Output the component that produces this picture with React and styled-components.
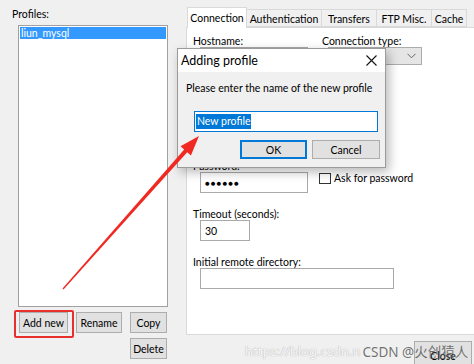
import React from "react";
import styled, { createGlobalStyle } from "styled-components";

const Global = createGlobalStyle`
  html, body { margin: 0; padding: 0; background: #f0f0f0; }
  body { font-family: "Lato", "Noto Sans", "Noto Sans CJK SC", sans-serif; font-size: 10.5px; color: #000; }
  * { box-sizing: border-box; }
`;

const Window = styled.div`
  position: relative;
  width: 474px;
  height: 364px;
  overflow: hidden;
  background: #f0f0f0;
  display: flex;
`;

const LeftCol = styled.div`
  width: 186px;
  flex: none;
  display: flex;
  flex-direction: column;
  padding: 6px 0 0 12px;
`;

const Caption = styled.div`
  line-height: 16px;
  height: 16px;
`;

const ListBox = styled.div`
  margin: 3px 0 0 6px;
  width: 150px;
  height: 282px;
  background: #fff;
  border: 1px solid #a0a0a0;
  padding: 1px;
`;

const ListItem = styled.div`
  height: 12px;
  line-height: 12px;
  padding-left: 1px;
  background: ${(p) => (p.$selected ? "#3399ff" : "transparent")};
  color: ${(p) => (p.$selected ? "#fff" : "#000")};
`;

const ButtonGrid = styled.div`
  margin: 5px 0 0 7px;
  display: grid;
  grid-template-columns: 49px 46px 37px;
  grid-auto-rows: 21px;
  column-gap: 8px;
  row-gap: 5px;
`;

const WinButton = styled.button`
  font: inherit;
  color: #000;
  padding: 0;
  background: #e1e1e1;
  border: 1px solid ${(p) => (p.$default ? "#0078d7" : "#adadad")};
  box-shadow: ${(p) => (p.$default ? "inset 0 0 0 1px #0078d7" : "none")};
  grid-column: ${(p) => p.$col || "auto"};
  width: ${(p) => (p.$w ? p.$w + "px" : "auto")};
  height: ${(p) => (p.$h ? p.$h + "px" : "auto")};
`;

const RightCol = styled.div`
  flex: 1;
  display: flex;
  flex-direction: column;
  padding-top: 7px;
  min-width: 0;
`;

const TabStrip = styled.div`
  display: flex;
  align-items: flex-end;
  height: 20px;
  padding-left: 1px;
  position: relative;
  z-index: 1;
`;

const Tab = styled.div`
  width: ${(p) => p.$w}px;
  height: ${(p) => (p.$active ? 21 : 18)}px;
  margin-bottom: ${(p) => (p.$active ? -1 : 0)}px;
  background: ${(p) => (p.$active ? "#fff" : "#f0f0f0")};
  border: 1px solid #d9d9d9;
  border-bottom: ${(p) => (p.$active ? "none" : "1px solid #d9d9d9")};
  border-left: ${(p) => (p.$first || p.$active ? "1px solid #d9d9d9" : "none")};
  display: flex;
  align-items: center;
  justify-content: center;
  white-space: nowrap;
  padding-top: ${(p) => (p.$active ? 0 : 1)}px;
`;

const Panel = styled.div`
  flex: 1;
  margin-right: -10px;
  background: #fff;
  border: 1px solid #d9d9d9;
  padding: 6px 0 0 6px;
  display: flex;
  flex-direction: column;
  gap: 14px;
`;

const Row = styled.div`
  display: flex;
  align-items: flex-start;
  gap: ${(p) => p.$gap || 0}px;
  margin-top: ${(p) => p.$mt || 0}px;
`;

const Field = styled.div`
  display: flex;
  flex-direction: column;
`;

const FieldLabel = styled.div`
  line-height: 14px;
  height: 14px;
  white-space: nowrap;
`;

const TextBox = styled.div`
  margin: -1px 0 0 7px;
  width: ${(p) => p.$w}px;
  height: 21px;
  background: #fff;
  border: 1px solid #a9a9a9;
  padding-left: 4px;
  display: flex;
  align-items: center;
  font-size: ${(p) => (p.$dots ? "8px" : "inherit")};
  letter-spacing: ${(p) => (p.$dots ? "1px" : "0")};
`;

const Select = styled.div`
  margin: -1px 0 0 6px;
  width: 94px;
  height: 18px;
  background: #e5e5e5;
  border: 1px solid #acacac;
  display: flex;
  align-items: center;
  justify-content: flex-end;
  padding-right: 5px;
`;

const CheckRow = styled.label`
  display: flex;
  align-items: center;
  gap: 3px;
  margin-top: 13px;
`;

const CheckBox = styled.span`
  width: 12px;
  height: 11px;
  border: 1px solid #333;
  background: #fff;
`;

const Footer = styled.div`
  height: 29px;
  flex: none;
  display: flex;
  justify-content: flex-end;
  padding: 6px 0 0 0;
  margin-right: 2px;
`;

const Dialog = styled.div`
  position: absolute;
  left: 177px;
  top: 48px;
  width: 209px;
  height: 120px;
  border: 1px solid #9a9a9a;
  background: #f0f0f0;
  box-shadow: 3px 4px 10px rgba(0, 0, 0, 0.28);
  display: flex;
  flex-direction: column;
  z-index: 5;
`;

const TitleBar = styled.div`
  height: 23px;
  background: #fff;
  display: flex;
  align-items: center;
  justify-content: space-between;
  padding: 0 8px 0 3px;
  font-size: 12.5px;
`;

const DialogBody = styled.div`
  flex: 1;
  padding: 9px 5px 0 8px;
  display: flex;
  flex-direction: column;
`;

const Prompt = styled.div`
  line-height: 14px;
  height: 14px;
  white-space: nowrap;
`;

const NameInput = styled.div`
  margin: 16px 0 0 8px;
  width: 184px;
  height: 21px;
  background: #fff;
  border: 1px solid #0078d7;
  padding-left: 1px;
  display: flex;
  align-items: center;
`;

const Selection = styled.span`
  background: #0078d7;
  color: #fff;
  line-height: 15px;
  padding: 0 1px;
`;

const DialogButtons = styled.div`
  margin-top: 8px;
  display: flex;
  justify-content: flex-end;
  gap: 5px;
`;

const Highlight = styled.div`
  position: absolute;
  left: 14px;
  top: 310px;
  width: 60px;
  height: 28px;
  border: 2px solid #e8302c;
  border-radius: 2px;
  z-index: 6;
`;

const ArrowSvg = styled.svg`
  position: absolute;
  left: 0;
  top: 0;
  z-index: 7;
  pointer-events: none;
`;

const Watermark = styled.div`
  position: absolute;
  left: 245px;
  top: 341px;
  display: flex;
  align-items: center;
  gap: 2px;
  font-family: "Noto Sans", "Noto Sans CJK SC", sans-serif;
  font-size: 13px;
  white-space: nowrap;
  z-index: 8;
`;

const WmUrl = styled.span`
  color: rgba(255, 255, 255, 0.9);
  text-shadow: 0 0 1px #b8b8b8, 0 0 1px #b8b8b8;
`;

const WmName = styled.span`
  color: rgba(90, 90, 90, 0.85);
  font-size: 13.5px;
`;

const tabs = [
  { name: "Connection", w: 60, active: true },
  { name: "Authentication", w: 75 },
  { name: "Transfers", w: 55 },
  { name: "FTP Misc.", w: 55 },
  { name: "Cache", w: 35 },
];

export default function App() {
  return (
    <>
      <Global />
      <Window>
        <LeftCol>
          <Caption>Profiles:</Caption>
          <ListBox>
            <ListItem $selected>liun_mysql</ListItem>
          </ListBox>
          <ButtonGrid>
            <WinButton>Add new</WinButton>
            <WinButton>Rename</WinButton>
            <WinButton>Copy</WinButton>
            <WinButton $col={3}>Delete</WinButton>
          </ButtonGrid>
        </LeftCol>

        <RightCol>
          <TabStrip>
            {tabs.map((t, i) => (
              <Tab key={t.name} $w={t.w} $active={t.active} $first={i === 0}>
                {t.name}
              </Tab>
            ))}
          </TabStrip>
          <Panel>
            <Row $gap={14}>
              <Field>
                <FieldLabel>Hostname:</FieldLabel>
                <TextBox $w={108} />
              </Field>
              <Field>
                <FieldLabel>Connection type:</FieldLabel>
                <Select>
                  <svg width="9" height="6" viewBox="0 0 9 6">
                    <path d="M0.5 0.8 L4.5 4.8 L8.5 0.8" fill="none" stroke="#666" strokeWidth="1" />
                  </svg>
                </Select>
              </Field>
            </Row>
            <Row $gap={11} $mt={77}>
              <Field>
                <FieldLabel>Password:</FieldLabel>
                <TextBox $w={108} $dots>●●●●●●</TextBox>
              </Field>
              <CheckRow>
                <CheckBox />
                Ask for password
              </CheckRow>
            </Row>
            <Field>
              <FieldLabel>Timeout (seconds):</FieldLabel>
              <TextBox $w={50}>30</TextBox>
            </Field>
            <Field>
              <FieldLabel>Initial remote directory:</FieldLabel>
              <TextBox $w={194} />
            </Field>
          </Panel>
          <Footer>
            <WinButton $w={58} $h={30}>Close</WinButton>
          </Footer>
        </RightCol>

        <Dialog>
          <TitleBar>
            <span>Adding profile</span>
            <svg width="11" height="11" viewBox="0 0 11 11">
              <path d="M0.5 0.5 L10.5 10.5 M10.5 0.5 L0.5 10.5" stroke="#111" strokeWidth="1.1" />
            </svg>
          </TitleBar>
          <DialogBody>
            <Prompt>Please enter the name of the new profile</Prompt>
            <NameInput>
              <Selection>New profile</Selection>
            </NameInput>
            <DialogButtons>
              <WinButton $default $w={67} $h={19}>OK</WinButton>
              <WinButton $w={68} $h={19}>Cancel</WinButton>
            </DialogButtons>
          </DialogBody>
        </Dialog>

        <Highlight />
        <ArrowSvg width="474" height="364" viewBox="0 0 474 364">
          <polygon
            points="62.5,288.5 184.2,149.6 180.5,146.3 199,136 190.9,155.5 187.2,152.2 63.5,289.5"
            fill="#f02a22"
          />
        </ArrowSvg>
        <Watermark>
          <WmUrl>https://blog.csdn.n</WmUrl>
          <WmName>CSDN @火创猿人</WmName>
        </Watermark>
      </Window>
    </>
  );
}
